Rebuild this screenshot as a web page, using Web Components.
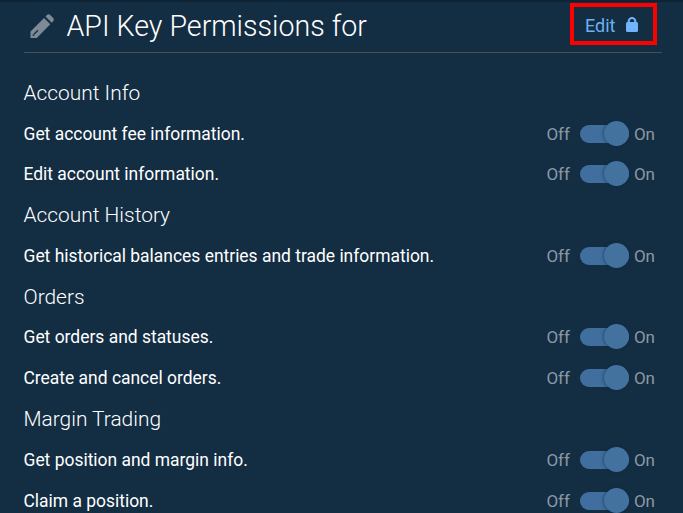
<!DOCTYPE html>
<html><head><meta charset="utf-8"><style>
html,body{margin:0;padding:0;height:513px;overflow:hidden;background:#132d43}
body{font-family:Roboto,"Liberation Sans",sans-serif}
</style></head><body>
<perm-panel>
<panel-head slot="head">API Key Permissions for</panel-head>
<sec-title>Account Info</sec-title>
<perm-row>Get account fee information.</perm-row>
<perm-row>Edit account information.</perm-row>
<sec-title>Account History</sec-title>
<perm-row>Get historical balances entries and trade information.</perm-row>
<sec-title>Orders</sec-title>
<perm-row>Get orders and statuses.</perm-row>
<perm-row>Create and cancel orders.</perm-row>
<sec-title>Margin Trading</sec-title>
<perm-row>Get position and margin info.</perm-row>
<perm-row>Claim a position.</perm-row>
</perm-panel>
<script>
function def(name,html){customElements.define(name,class extends HTMLElement{constructor(){super();this.attachShadow({mode:'open'}).innerHTML=html}})}
def('perm-panel',`<style>:host{display:block;border-top:2px solid #0e2435;height:511px;overflow:hidden}
.list{display:grid;grid-auto-rows:40.78px;padding:19.500px 28px 0 23.500px}</style>
<slot name="head"></slot><div class="list"><slot></slot></div>`);
def('panel-head',`<style>:host{display:flex;align-items:center;justify-content:space-between;height:51px;margin:0 21px 0 24px;border-bottom:1px solid #474d52;box-sizing:border-box}
.t{display:flex;align-items:center;gap:12.500px;font-size:28.600px;font-weight:300;color:#fff;padding-bottom:2px}
svg{display:block;margin-left:6px}
.e{display:flex;align-items:center;gap:11px;box-sizing:border-box;width:87px;height:42px;border:4px solid #fd0000;margin:0 5px 7px 0;padding:3px 0 0 11px;color:#6cb0f5;font-size:18px}
</style><div class="t"><svg width="24" height="24" viewBox="0 0 24 24"><path fill="#7e8a96" d="M0.500 24v-6.500L14 4l6.300 6.300L6.800 24zM15.500 2.500l1.500-1.500c.9-.9 2.300-.9 3.200 0l3 3c.9.9.900 2.300 0 3.200L21.700 8.700z"/><path fill="none" stroke="#132d43" stroke-width="1.300" d="M4 20.300 8 16.300M2.800 20.500l1.200 1.200"/></svg><slot></slot></div>
<div class="e">Edit<svg style="margin:-2px 0 0" width="12" height="15" viewBox="0 0 12 15"><rect y="5" width="12" height="10" rx="1.500" fill="#72b4fb"/><path fill="none" stroke="#72b4fb" stroke-width="2.100" d="M2.700 6V4.200a3.300 3.200 0 0 1 6.600 0V6"/></svg></div>`);
def('sec-title',`<style>:host{display:flex;align-items:center;font-size:20.900px;font-weight:300;color:#fff}</style><slot></slot>`);
def('perm-toggle',`<style>:host{display:flex;align-items:center;font-size:17px;color:#8b98a3}
.tr{width:49px;height:18px;border-radius:9px;background:#406f9f;margin:0 5px 0 10px;position:relative}
.k{position:absolute;right:0;top:-4px;width:25px;height:25px;border-radius:50%;background:#44729f;box-shadow:-1px 0 3px rgba(15,40,70,.5)}
</style><span>Off</span><div class="tr"><div class="k"></div></div><span>On</span>`);
def('perm-row',`<style>:host{display:flex;align-items:center;justify-content:space-between;font-size:17.450px;font-weight:400;color:#fff}</style><slot></slot><perm-toggle></perm-toggle>`);
</script></body></html>
